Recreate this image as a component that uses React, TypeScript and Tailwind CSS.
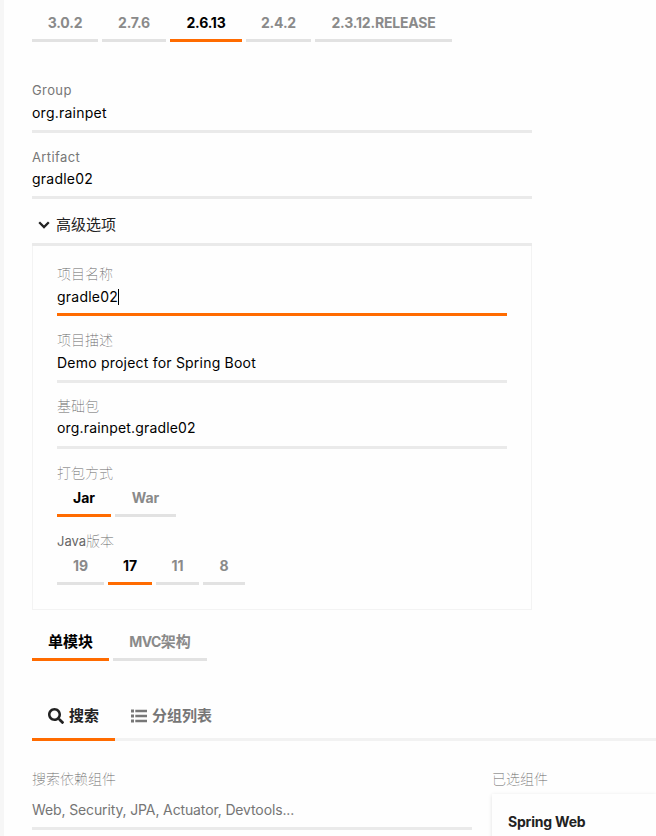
import { useState } from 'react';
import clsx from 'clsx';
import { FaSearch } from 'react-icons/fa';

interface TabItem {
  prefix?: string;
  label: string;
  width: string;
}

const VERSIONS: TabItem[] = [
  { label: '3.0.2', width: 'w-[66px]' },
  { label: '2.7.6', width: 'w-[64px]' },
  { label: '2.6.13', width: 'w-[72px]' },
  { label: '2.4.2', width: 'w-[65px]' },
  { label: '2.3.12.RELEASE', width: 'w-[137px]' },
];

const PACKAGINGS: TabItem[] = [
  { label: 'Jar', width: 'w-[54px]' },
  { label: 'War', width: 'w-[61px]' },
];

const JAVA_VERSIONS: TabItem[] = [
  { label: '19', width: 'w-[47px]' },
  { label: '17', width: 'w-[44px]' },
  { label: '11', width: 'w-[43px]' },
  { label: '8', width: 'w-[42px]' },
];

const MODULES: TabItem[] = [
  { label: '单模块', width: 'w-[77px]' },
  { prefix: 'MVC', label: '架构', width: 'w-[94px]' },
];

const Tabs = ({ items, initial, text }: { items: TabItem[]; initial: string; text: string }) => {
  const [active, setActive] = useState(initial);

  return (
    <div className="flex h-[29px] gap-1">
      {items.map((item) => (
        <button
          key={item.label}
          onClick={() => setActive(item.label)}
          className={clsx(
            'h-full border-b-[3px] pb-1.5 text-center leading-5 font-bold whitespace-nowrap',
            item.width,
            text,
            active === item.label ? 'border-[#ff6b00] text-black' : 'border-[#e2e2e2] text-[#8a8a8a]'
          )}
        >
          {item.prefix && <span className="text-[14px] tracking-[-0.6px]">{item.prefix}</span>}
          {item.label}
        </button>
      ))}
    </div>
  );
};

const Label = ({ children }: { children: string }) => (
  <div className="h-5 text-[13px] leading-[21px] tracking-[0.4px] whitespace-nowrap text-[#777]">{children}</div>
);

const CjkLabel = ({ children }: { children: string }) => (
  <div className="h-5 text-[14px] leading-5 font-thin whitespace-nowrap text-[#666]">{children}</div>
);

const ListIcon = () => (
  <svg width="16" height="16" viewBox="0 0 16 16" fill="currentColor" className="mt-0.5">
    <path d="M0 1.5h3v3H0zM0 6.5h3v3H0zM0 11.5h3v3H0zM4.3 1.7H16v2.6H4.3zM4.3 6.7H16v2.6H4.3zM4.3 11.7H16v2.6H4.3z" />
  </svg>
);

export default function App() {
  return (
    <div className="h-[836px] w-[656px] overflow-hidden border-l-4 border-[#f6f6f6] bg-[#fefefe] pl-7 font-[Inter,'Noto_Sans_CJK_SC',sans-serif] text-[14px] text-black">
      {/* Spring Boot version */}
      <div className="pt-[13px]">
        <Tabs items={VERSIONS} initial="2.6.13" text="text-[14px] tracking-[-0.2px]" />
      </div>

      {/* Coordinates */}
      <div className="w-[500px] pt-[38px]">
        <div className="h-[53px] border-b-[3px] border-[#eaeaea]">
          <Label>Group</Label>
          <div className="pt-[3px] leading-5 tracking-[0.23px]">org.rainpet</div>
        </div>
        <div className="mt-[14px] h-[52px] border-b-[3px] border-[#eaeaea]">
          <Label>Artifact</Label>
          <div className="pt-[2px] leading-5 tracking-[0.23px]">gradle02</div>
        </div>
      </div>

      {/* Advanced options */}
      <div className="w-[500px]">
        <div className="flex h-[47px] items-center gap-1.5 border-b-[3px] border-[#eaeaea] pb-px pl-1.5 pt-[9px] text-[15px] text-[#222]">
          <svg width="12" height="8" viewBox="0 0 12 8" fill="none" stroke="currentColor" strokeWidth="2.3">
            <path d="M1.2 1.2 6 6 10.8 1.2" />
          </svg>
          <span className="leading-5">高级选项</span>
        </div>
        <div className="h-[364px] border border-t-0 border-[#f3f3f3] px-6 pt-[18px]">
          <div className="h-[52px] border-b-[3px] border-[#ff6b00]">
            <CjkLabel>项目名称</CjkLabel>
            <div className="flex items-center pt-[3px] leading-5 tracking-[0.23px]">
              gradle02
              <span className="h-4 w-px bg-black" />
            </div>
          </div>
          <div className="mt-[14px] h-[53px] border-b-[3px] border-[#eaeaea]">
            <CjkLabel>项目描述</CjkLabel>
            <div className="pt-[3px] leading-5 tracking-[0.21px]">Demo project for Spring Boot</div>
          </div>
          <div className="mt-[13px] h-[53px] border-b-[3px] border-[#eaeaea]">
            <CjkLabel>基础包</CjkLabel>
            <div className="pt-[2px] leading-5 tracking-[0.17px]">org.rainpet.gradle02</div>
          </div>
          <div className="pt-[14px]">
            <CjkLabel>打包方式</CjkLabel>
            <div className="pt-[5px]">
              <Tabs items={PACKAGINGS} initial="Jar" text="text-[14px]" />
            </div>
          </div>
          <div className="pt-[14px]">
            <div className="flex">
              <div className="text-[13px] leading-[21px] text-[#666]">Java</div>
              <CjkLabel>版本</CjkLabel>
            </div>
            <div className="pt-1">
              <Tabs items={JAVA_VERSIONS} initial="17" text="text-[14px] tracking-[-0.15px]" />
            </div>
          </div>
        </div>
      </div>

      {/* Module layout */}
      <div className="pt-[22px]">
        <Tabs items={MODULES} initial="单模块" text="text-[15px]" />
      </div>

      {/* Dependencies */}
      <div className="mt-[42px] flex h-[38px] text-[15px]">
        <button className="flex w-[83px] gap-[5px] border-b-[3px] border-[#ff6b00] pl-4 pt-[3px] leading-5 font-bold text-[#222]">
          <FaSearch size={16} className="mt-0.5" />
          搜索
        </button>
        <button className="flex flex-1 gap-[5px] border-b-[3px] border-[#f2f2f2] pl-4 pt-[3px] leading-5 font-bold text-[#777]">
          <ListIcon />
          分组列表
        </button>
      </div>
      <div className="flex gap-5 pt-7">
        <div className="h-[61px] w-[440px] border-b-[3px] border-[#eaeaea]">
          <CjkLabel>搜索依赖组件</CjkLabel>
          <div className="pt-[11px] leading-5 tracking-[-0.13px] text-[#757575]">Web, Security, JPA, Actuator, Devtools...</div>
        </div>
        <div className="flex-1">
          <CjkLabel>已选组件</CjkLabel>
          <div className="mt-[5px] h-20 bg-[#fefefe] pl-4 pt-[18px] leading-5 font-bold tracking-[-0.2px] text-[#222] shadow-[0_1px_4px_rgba(0,0,0,0.12)]">
            Spring Web
          </div>
        </div>
      </div>
    </div>
  );
}
